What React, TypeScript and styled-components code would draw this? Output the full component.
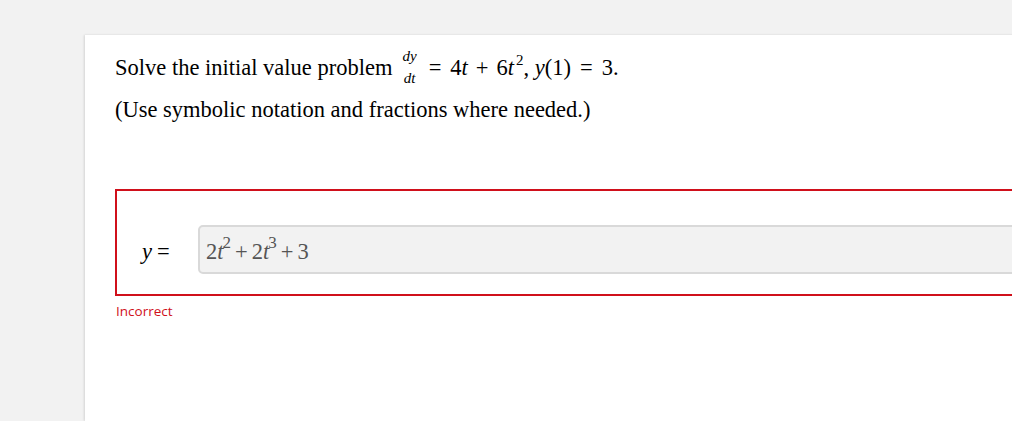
import styled, { createGlobalStyle } from 'styled-components';

const GlobalStyle = createGlobalStyle`
  html, body {
    margin: 0;
    padding: 0;
    background: #f2f2f2;
    overflow: hidden;
  }
`;

const Page = styled.div`
  padding: 35px 0 0 85px;
  width: 1200px;
`;

const Card = styled.div`
  background: #ffffff;
  box-shadow: -1px 0 2px rgba(0, 0, 0, 0.12);
  height: 386px;
  padding: 18px 0 0 30px;
  box-sizing: border-box;
  font-family: "Liberation Serif", "Times New Roman", serif;
  color: #000;
`;

const Line = styled.p<{ gap?: number }>`
  margin: 0;
  margin-top: ${({ gap }) => gap ?? 0}px;
  font-size: 22.5px;
  line-height: 30px;
  white-space: nowrap;
`;

const I = styled.i`
  font-style: italic;
`;

const Op = styled.span<{ w?: number }>`
  margin: 0 ${({ w }) => w ?? 9}px;
`;

const Sup = styled.sup`
  font-size: 15px;
  vertical-align: 10px;
  line-height: 0;
  margin-left: 2px;
`;

const Frac = styled.span`
  display: inline-flex;
  flex-direction: column;
  align-items: center;
  vertical-align: middle;
  font-size: 15px;
  font-style: italic;
  line-height: 22px;
  margin: -14px 3px 0 10px;
  position: relative;
  top: 4px;
`;

const AnswerBox = styled.div`
  margin-top: 64px;
  border: 2px solid #d0101b;
  box-sizing: border-box;
  height: 107px;
  display: flex;
  align-items: flex-start;
  padding: 34px 0 0 25px;
`;

const Label = styled.span`
  font-size: 22.5px;
  width: 56px;
  line-height: 49px;
  padding-top: 2px;
`;

const Field = styled.div`
  flex: 1;
  height: 49px;
  box-sizing: border-box;
  background: #f2f2f2;
  border: 2px solid #d9d9d9;
  border-radius: 5px;
  padding: 7px 0 0 6px;
  font-size: 22.5px;
  line-height: 36px;
  color: #555555;
  white-space: nowrap;
`;

const FieldSup = styled.sup`
  font-size: 17px;
  vertical-align: 11px;
  line-height: 0;
  margin-left: -1px;
`;

const Status = styled.div`
  margin-top: 6px;
  margin-left: 1px;
  font-family: "Open Sans", "Noto Sans", sans-serif;
  font-size: 13.5px;
  color: #d0101b;
`;

export default function App() {
  return (
    <>
      <GlobalStyle />
      <Page>
        <Card>
          <Line>
            Solve the initial value problem
            <Frac>
              <span>dy</span>
              <span>dt</span>
            </Frac>
            <Op>=</Op>4<I>t</I>
            <Op w={8}>+</Op>6<I>t</I>
            <Sup>2</Sup>, <I>y</I>(1)<Op>=</Op>3.
          </Line>
          <Line gap={10}>(Use symbolic notation and fractions where needed.)</Line>
          <AnswerBox>
            <Label>
              <I>y</I>
              <Op w={5}>=</Op>
            </Label>
            <Field>
              2<I>t</I>
              <FieldSup>2</FieldSup>
              <Op w={4}>+</Op>2<I>t</I>
              <FieldSup>3</FieldSup>
              <Op w={4}>+</Op>3
            </Field>
          </AnswerBox>
          <Status>Incorrect</Status>
        </Card>
      </Page>
    </>
  );
}
